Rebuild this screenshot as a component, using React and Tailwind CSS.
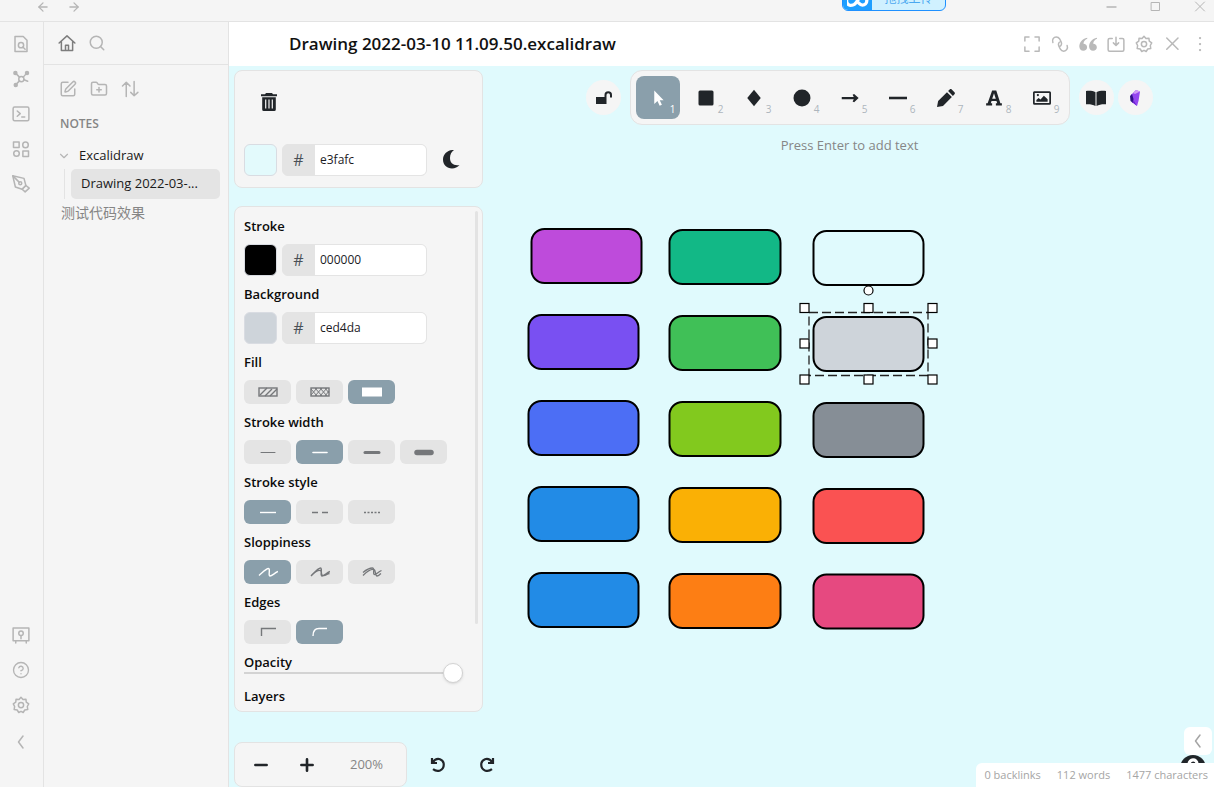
import React, { useState } from 'react';
import { ArrowLeft, ArrowRight, Search, FolderPlus, SquarePen, ChevronDown, CircleQuestionMark, X } from 'lucide-react';

const shapes = [
  { x: 302.5, y: 163, w: 110, fill: '#be4bdb' },
  { x: 299.5, y: 249, w: 110, fill: '#7950f2' },
  { x: 299.5, y: 335, w: 110, fill: '#4c6ef5' },
  { x: 299.5, y: 421, w: 110, fill: '#228be6' },
  { x: 299.5, y: 507, w: 110, fill: '#228be6' },
  { x: 440.5, y: 164, w: 111, fill: '#12b886' },
  { x: 440.5, y: 250, w: 111, fill: '#40c057' },
  { x: 440.5, y: 336, w: 111, fill: '#82c91e' },
  { x: 440.5, y: 422, w: 111, fill: '#fab005' },
  { x: 440.5, y: 508, w: 111, fill: '#fd7e14' },
  { x: 584.5, y: 165, w: 110, fill: 'none' },
  { x: 584.5, y: 251, w: 110, fill: '#ced4da' },
  { x: 584.5, y: 337, w: 110, fill: '#868e96' },
  { x: 584.5, y: 423, w: 110, fill: '#fa5252' },
  { x: 584.5, y: 508.5, w: 110, fill: '#e64980' },
];

const handles = [
  [575.5, 242], [639.5, 242], [703.5, 242],
  [575.5, 277.5], [703.5, 277.5],
  [575.5, 313.5], [639.5, 313.5], [703.5, 313.5],
];

const Icon = ({ size = 18, box = 24, children }) => (
  <svg width={size} height={size} viewBox={`0 0 ${box} ${box}`} fill="none" stroke="currentColor" strokeWidth="2" strokeLinecap="round" strokeLinejoin="round" aria-hidden="true">
    {children}
  </svg>
);

const GearIcon = () => (
  <Icon>
    <path d="M12 1.8l2.6 3 4-.5.4 4 3.3 2.2-1.9 3.5.6 4-4 .7-2.1 3.3-2.9-1.6-3 1.6-2.1-3.3-4-.7.6-4L1.7 10.5 5 8.3l.4-4 4 .5z" />
    <circle cx="12" cy="12" r="3.5" />
  </Icon>
);

const ThinChevron = () => (
  <svg width="16" height="22" viewBox="0 0 16 22" fill="none" stroke="currentColor" strokeWidth="1.5" strokeLinecap="round" strokeLinejoin="round" aria-hidden="true">
    <path d="M10 5L5.5 11l4.500 6" />
  </svg>
);

const ribbonTop = [
  { label: 'Quick switcher', icon: <><path d="M4 2h11l5 5v15H4z" /><circle cx="12" cy="13.5" r="3.5" /><path d="M14.5 16L17.5 19" /></> },
  { label: 'Graph view', icon: <><circle cx="4.5" cy="4" r="2" fill="currentColor" /><circle cx="20" cy="4" r="2" fill="currentColor" /><circle cx="5" cy="20" r="2" fill="currentColor" /><circle cx="12.5" cy="12" r="3.5" /><path d="M6 5.5l4 4M18.5 5.5L15 9.5M6 18.5l4-4M16 13l5 2" /></> },
  { label: 'Command palette', icon: <><rect x="1.5" y="2.5" width="21" height="18.5" rx="2" /><path d="M7 8l4 3.5L7 15M13 16h4" /></> },
  { label: 'Workspaces', icon: <><rect x="2" y="2.5" width="7.5" height="7.5" /><circle cx="18" cy="6.5" r="3.7" /><circle cx="6" cy="18" r="3.7" /><rect x="14.5" y="14.5" width="7.5" height="7.5" /></> },
  { label: 'New drawing', icon: <><path d="M1 1l15 3.500 2.500 9.500-5 5-9-3z" /><path d="M1.5 1.5l8 8M13.5 19l5-5 4.500 3.500-5.500 5z" /><circle cx="11" cy="11" r="2" /></> },
];

const ribbonBottom = [
  { label: 'Open another vault', icon: <Icon><path d="M1.5 2.5h21v17h-21zM5 20v2.500M19 20v2.500M12 13v4" /><circle cx="12" cy="9.5" r="3" /></Icon> },
  { label: 'Help', icon: <CircleQuestionMark size={18} strokeWidth={1.8} /> },
  { label: 'Settings', icon: <GearIcon /> },
  { label: 'Collapse', icon: <ThinChevron /> },
];

const headerActions = [
  { label: 'Fullscreen', icon: <path d="M2.5 8V2.500H8M16 2.500h5.500V8M21.5 16v5.500H16M8 21.500H2.500V16" /> },
  { label: 'Copy link', icon: <path d="M2.5 10C1 6 3.500 2.500 7 2.500c2 0 3.500 1 4.500 2.800l2 3.700c1.300 2.700.3 5.500-2.500 6.500M21.5 14c1.500 4-1 7.500-4.500 7.500-2 0-3.500-1-4.500-2.800l-2-3.700c-1.300-2.700-.3-5.500 2.500-6.500" /> },
  { label: 'Quote', icon: <path fill="currentColor" stroke="none" d="M11 3.500C4 5 0 10 .5 16c.3 3 2.300 5 5.200 5 3 0 5.100-2 5.100-4.800S8.600 11.500 6 11.500c0-3 2.200-5.500 5-6.500zM24 3.500c-7 1.500-11 6.500-10.500 12.500.3 3 2.300 5 5.200 5 3 0 5.100-2 5.100-4.800s-2.200-4.700-4.800-4.700c0-3 2.200-5.500 5-6.500z" /> },
  { label: 'Export', icon: <path d="M7 4.500H3.500c-1 0-2 1-2 2v13c0 1 1 2 2 2h17c1 0 2-1 2-2v-13c0-1-1-2-2-2H17M12 3v10.500M8.500 10.500l3.500 3.500 3.500-3.500" /> },
];

// filled glyphs on a 24x24 grid
const tools = [
  { label: 'Selection', icon: <path d="M7 2v18l4.300-4 2.900 6.300 3-1.300-2.900-6h5.200z" /> },
  { label: 'Rectangle', icon: <rect x="2" y="2" width="20" height="20" rx="2" /> },
  { label: 'Diamond', icon: <path d="M12 1l9 11-9 11-9-11z" /> },
  { label: 'Ellipse', icon: <circle cx="12" cy="12" r="11.3" /> },
  { label: 'Arrow', icon: <path d="M1 10.500h16l-1.500-3L17.500 6.500 23.500 12l-6 5.500-2-1 1.500-3H1z" /> },
  { label: 'Line', icon: <path d="M0 10.300h24v3.400H0z" /> },
  { label: 'Draw', icon: <path d="M0 24l1.500-8L13.300 4.200l6.500 6.500L8 22.500zM14.800 2.800l2.100-2.100c.8-.8 2-.8 2.700 0l3.700 3.700c.8.8.8 2 0 2.700l-2.100 2.100z" /> },
  { label: 'Text', icon: <path fillRule="evenodd" d="M9.500 2H15l5.500 17H22.500v3h-8v-3h1.800l-1-3H8.700l-1 3h1.800v3h-8v-3h2zM9.600 13h4.800L12 5.800z" /> },
  { label: 'Image', icon: <path fillRule="evenodd" d="M2 3h20a2 2 0 012 2v14a2 2 0 01-2 2H2a2 2 0 01-2-2V5c0-1.100.900-2 2-2zm.3 2.300v13.400h19.400V5.300zM4.500 17v-2.500l3-2.500 2.500 2 4.500-5 5 4.500V17zM5 8a1.500 1.500 0 103 0 1.500 1.500 0 00-3 0z" /> },
];

const strokeWidths = [1, 1.6, 3, 5.5];

const optionGroups = [
  {
    name: 'Fill',
    active: 2,
    options: [
      <g key="hachure"><rect x="1" y="2" width="18" height="8" /><path d="M2 9l7-7M7 10l7-7M12 10l7-7" /></g>,
      <g key="cross"><rect x="1" y="2" width="18" height="8" /><path d="M1 9l6-7M5 10l7-8M10 10l7-8M15 10l4-5M1 3l6 7M5 2l7 8M10 2l7 8M15 2l4 5" strokeWidth="1" /></g>,
      <rect key="solid" x="0" y="1.5" width="20" height="9" fill="currentColor" stroke="none" />,
    ],
  },
  {
    name: 'Stroke width',
    active: 1,
    options: strokeWidths.map((w) => (
      <path key={w} d="M3 6.500h14" strokeWidth={w} strokeLinecap="round" />
    )),
  },
  {
    name: 'Stroke style',
    active: 0,
    options: [
      <path key="solid" d="M2 6.500h16" />,
      <path key="dashed" d="M2 6.500h6M12 6.500h6" strokeWidth="1.7" />,
      <path key="dotted" d="M2 6.500h16" strokeWidth="1.6" strokeDasharray="2 1.5" />,
    ],
  },
  {
    name: 'Sloppiness',
    active: 0,
    options: [
      <path key="architect" d="M1 9.500C4 7 8 2.500 10.500 2.500c2 0-.5 7.500 1.500 7.500s4-2.500 8-4.500" />,
      <path key="artist" d="M1 10C4 7 8 2 10.500 2c2 0-.5 8 1.500 8s4-2.500 8-4.500M1 10c4-4 8-6 9.500-5.500s0 5.500 3 5 3-1.500 6-2" />,
      <path key="cartoonist" d="M1 6.500C4 4 8 2 10.500 2s0 6.500 2 6.500 3-2 7-4M1 9.500c5-5 9-6.500 11-6s1 6.500 3 6.500 2-1 4-2.500" strokeWidth="1.3" />,
    ],
  },
  {
    name: 'Edges',
    active: 1,
    options: [
      <path key="sharp" d="M3.500 10V2.500H18" />,
      <path key="round" d="M3 10C3 4 6 2.500 9 2.500h8" />,
    ],
  },
];

const ColorField = ({ label, value, swatch }) => {
  const [hex, setHex] = useState(value);
  return (
    <div className="flex gap-[5px]">
      <button aria-label={`${label} picker`} className={`w-[33px] h-8 rounded-md border border-[#d9dce2] ${swatch}`} />
      <label className="flex w-[145px] h-8 rounded-md border border-[#e4e4e4] bg-[#e4e4e4] overflow-hidden">
        <span className="w-8 pr-px flex items-center justify-center text-base text-[#495057]">#</span>
        <input
          aria-label={label}
          value={hex}
          onChange={(e) => setHex(e.target.value)}
          className="flex-1 min-w-0 bg-white px-[5px] text-xs text-[#1b1b1f] outline-none"
        />
      </label>
    </div>
  );
};

const OptionGroup = ({ name, active, options }) => {
  const [selected, setSelected] = useState(active);
  return (
    <fieldset>
      <legend className="text-[13px] leading-5 font-semibold mb-2">{name}</legend>
      <div className="flex gap-[5px]">
        {options.map((icon, i) => (
          <button
            key={i}
            aria-label={`${name} ${i + 1}`}
            aria-pressed={selected === i}
            onClick={() => setSelected(i)}
            className={`w-[47px] h-6 rounded-md flex items-center justify-center ${selected === i ? 'bg-[#8a9fab] text-white' : 'bg-[#e4e4e4] text-[#75777a]'}`}
          >
            <svg width="20" height="12" viewBox="0 0 20 12" fill="none" stroke="currentColor" strokeWidth="1.4" aria-hidden="true">{icon}</svg>
          </button>
        ))}
      </div>
    </fieldset>
  );
};

const TitleBar = () => (
  <header className="relative h-[22px] shrink-0 border-b border-[#e3e3e3] flex items-start justify-between pl-9 overflow-hidden text-[#b5b5b5]">
    <div className="flex gap-[17px]">
      <button aria-label="Back"><ArrowLeft size={14} strokeWidth={2.2} /></button>
      <button aria-label="Forward"><ArrowRight size={14} strokeWidth={2.2} /></button>
    </div>
    <div className="flex gap-8 pr-2 pt-px">
      <button aria-label="Minimize"><Icon size={12} box={12}><path d="M1 6h9" strokeWidth="1.3" /></Icon></button>
      <button aria-label="Maximize"><Icon size={12} box={12}><path d="M1.5 1.500h8v8h-8z" strokeWidth="1" /></Icon></button>
      <button aria-label="Close"><Icon size={12} box={12}><path d="M1.5 1l9 9M10.500 1l-9 9" strokeWidth="1" /></Icon></button>
    </div>
    {/* upload badge, hangs over the top edge */}
    <div className="absolute right-[268px] -top-3 h-[23px] w-[104px] rounded-md border border-[#1e90ff] bg-[#d0f1ff] flex overflow-hidden text-[#4aa8f0]">
      <span className="w-[29px] bg-[#1e9fff] flex items-end justify-center text-white">
        <Icon size={22} box={20}><path d="M5 8a4 4 0 100 7.500c4 0 5-8 9-8a4 4 0 110 8c-1.500 0-2.500-1-3.500-2" strokeWidth="3" /></Icon>
      </span>
      <span className="flex-1 text-center text-xs leading-5 whitespace-nowrap">拖拽上传</span>
    </div>
  </header>
);

const Sidebar = () => (
  <aside className="w-[185px] shrink-0 border-r border-[#e3e3e3] text-[#b5b5b5]">
    <div className="h-[43px] border-b border-[#e3e3e3] flex items-center gap-3 pl-[14px]">
      <button aria-label="Files" className="text-[#7d7d7d]">
        <Icon><path d="M1.5 12L12 2.500 22.500 12M4.5 10v12h15V10M10 22v-7h4v7" /></Icon>
      </button>
      <button aria-label="Search"><Search size={18} strokeWidth={2} /></button>
    </div>
    <div className="flex gap-[13px] pt-[15px] pl-[15px]">
      <button aria-label="New note"><SquarePen size={18} strokeWidth={2} /></button>
      <button aria-label="New folder"><FolderPlus size={18} strokeWidth={2} /></button>
      <button aria-label="Sort"><Icon><path d="M7 22V3M2 8l5-5 5 5M17.5 2v19M13 16.500l4.500 4.500 5-4.500" /></Icon></button>
    </div>
    <h2 className="pl-4 pt-[18px] text-xs leading-4 font-semibold text-[#858585]">NOTES</h2>
    <nav className="pt-[11px] pl-[13px] pr-2 text-[13px]">
      <a href="#excalidraw" className="flex items-center h-[26px] text-[#1a1a1a]">
        <ChevronDown size={14} className="mr-2 text-[#b5b5b5]" />
        Excalidraw
      </a>
      <div className="ml-[7px] pl-[6px] border-l border-[#e3e3e3]">
        <a href="#drawing" className="flex items-center h-[30px] rounded-[5px] bg-[#e4e4e4] px-[10px] text-[#1a1a1a] whitespace-nowrap">Drawing 2022-03-...</a>
      </div>
      <a href="#note" className="flex items-center h-7 pl-1 text-sm text-[#858585]">测试代码效果</a>
    </nav>
  </aside>
);

const Drawing = () => (
  <svg className="absolute inset-0 w-full h-full" aria-label="Drawing canvas">
    {shapes.map((s, i) => (
      <rect key={i} x={s.x} y={s.y} width={s.w} height="54" rx="13" fill={s.fill} stroke="#000" strokeWidth="2" />
    ))}
    <rect x="580" y="246.5" width="119" height="63" fill="none" stroke="#222" strokeWidth="1.3" strokeDasharray="9 4" />
    {handles.map(([x, y]) => (
      <rect key={`${x}-${y}`} x={x - 4.5} y={y - 4.5} width="9" height="9" fill="#fff" stroke="#000" strokeWidth="1.2" />
    ))}
    <circle cx="639.5" cy="224.5" r="4.5" fill="#fff" stroke="#000" strokeWidth="1.2" />
  </svg>
);

const Toolbar = () => {
  const [tool, setTool] = useState(0);
  return (
    <div className="flex-1 pl-[2px] grid grid-cols-[1fr_auto_1fr] items-center content-start">
      <button aria-label="Keep tool active" className="justify-self-end mr-[9px] w-[35px] h-[35px] rounded-full bg-[#f5f5f5] flex items-center justify-center text-[#212529]">
        <svg width="18" height="18" viewBox="0 0 18 18" fill="currentColor" aria-hidden="true">
          <path d="M2 8h8.500V6a3.700 3.700 0 017.500 0v2.500h-2V6a1.700 1.700 0 00-3.500 0v9H2z" />
        </svg>
      </button>
      <div className="flex gap-1 p-[5px] rounded-xl border border-[#e3e3e3] bg-[#f5f5f5]">
        {tools.map((t, i) => (
          <button
            key={t.label}
            aria-label={t.label}
            onClick={() => setTool(i)}
            className={`relative w-11 h-[43px] rounded-lg flex items-center justify-center ${tool === i ? 'bg-[#8a9fab] text-white' : 'text-[#212529]'}`}
          >
            <svg width="18" height="18" viewBox="0 0 24 24" fill="currentColor" aria-hidden="true">{t.icon}</svg>
            <span className={`absolute right-1 bottom-1 text-[10px] leading-3 ${tool === i ? 'text-white' : 'text-[#adb5bd]'}`}>{i + 1}</span>
          </button>
        ))}
      </div>
      <div className="flex gap-1 ml-[9px]">
        <button aria-label="Library" className="w-[35px] h-[35px] rounded-full bg-[#f5f5f5] flex items-center justify-center text-[#212529]">
          <svg width="20" height="16" viewBox="0 0 20 16" fill="currentColor" aria-hidden="true">
            <path d="M0 1c4-.5 7 0 9.500 1.200V16C7 14.500 4 14 0 14.200zM20 1c-4-.5-7 0-9.500 1.200V16c2.500-1.500 5.500-2 9.500-1.800z" />
          </svg>
        </button>
        <button aria-label="Obsidian tools" className="w-[35px] h-[35px] rounded-full bg-[#f5f5f5] flex items-center justify-center">
          <svg width="12" height="18" viewBox="0 0 12 18" aria-hidden="true">
            <path d="M2 6l5-5 4 1.500-1.500 9.500L8 17l-5-4z" fill="#9446f0" />
            <path d="M1 7l2-2 1.500 5L4 14 1.500 12z" fill="#30108a" />
            <path d="M4 4l3.500-3L11 2.500 6 5z" fill="#d19bf5" />
            <path d="M5 12l-2 1 5 4z" fill="#6c21cf" />
          </svg>
        </button>
      </div>
      <p className="col-start-2 pt-[10px] text-center text-[13px] leading-5 text-[#868686]">Press Enter to add text</p>
    </div>
  );
};

const PropertiesPanel = () => (
  <section className="relative flex-1 min-h-0 mt-[18px] mb-[30px] px-[9px] pt-[9px] rounded-lg border border-[#e3e3e3] bg-[#f5f5f5] overflow-hidden flex flex-col gap-2">
    <div className="absolute right-1 top-1 h-[413px] w-[3px] rounded bg-[#e3e3e3]" />
    <h3 className="text-[13px] leading-5 font-semibold">Stroke</h3>
    <ColorField label="Stroke color" value="000000" swatch="bg-black" />
    <h3 className="text-[13px] leading-5 font-semibold">Background</h3>
    <ColorField label="Background color" value="ced4da" swatch="bg-[#ced4da]" />
    {optionGroups.map((g) => (
      <OptionGroup key={g.name} {...g} />
    ))}
    <label className="block text-[13px] leading-5 font-semibold">
      Opacity
      <input
        type="range"
        defaultValue="100"
        className="block w-[219px] h-[2px] mb-1 appearance-none bg-[#d3d3d3] [&::-webkit-slider-thumb]:appearance-none [&::-webkit-slider-thumb]:w-5 [&::-webkit-slider-thumb]:h-5 [&::-webkit-slider-thumb]:rounded-full [&::-webkit-slider-thumb]:bg-white [&::-webkit-slider-thumb]:border [&::-webkit-slider-thumb]:border-[#d3d3d3] [&::-webkit-slider-thumb]:shadow-sm"
      />
    </label>
    <h3 className="text-[13px] leading-5 font-semibold">Layers</h3>
  </section>
);

const LeftColumn = () => (
  <div className="w-[249px] shrink-0 flex flex-col text-[#0b0b0b]">
    <section className="rounded-lg border border-[#e3e3e3] bg-[#f5f5f5] px-[9px] pt-[21px] pb-[11px]">
      <button aria-label="Reset the canvas" className="block ml-4 text-[#212529]">
        <svg width="18" height="20" viewBox="0 0 18 20" aria-hidden="true">
          <path d="M6 1h6l1 1.200h4v2H1v-2h4zM2.200 5.300h13.600V17.500a1.500 1.500 0 01-1.500 1.500H3.700a1.500 1.500 0 01-1.500-1.500z" fill="currentColor" />
          <path d="M5.700 7.500v9M9 7.500v9M12.300 7.500v9" stroke="#f5f5f5" strokeWidth="1.2" />
        </svg>
      </button>
      <div className="flex items-center gap-4 pt-8">
        <ColorField label="Canvas background" value="e3fafc" swatch="bg-[#e3fafc]" />
        <button aria-label="Dark mode" className="text-[#212529]">
          <svg width="20" height="20" viewBox="0 0 20 20" fill="currentColor" aria-hidden="true">
            <path d="M11 0C5-.5 0 4 0 9.500s4 9 9 9c3 0 5.500-1.200 7.500-3.500-6 1-9.500-2-9.500-7C7 4.500 8.500 1.500 11 0z" />
          </svg>
        </button>
      </div>
    </section>
    <PropertiesPanel />
    <div className="w-max flex items-center">
      <div className="w-[173px] h-[45px] rounded-lg border border-[#e3e3e3] bg-[#f5f5f5] flex items-center pl-[17px] text-[#212529]">
        <button aria-label="Zoom out"><Icon><path d="M4.500 12h15" strokeWidth="3.5" /></Icon></button>
        <button aria-label="Zoom in" className="ml-7"><Icon><path d="M4.500 12h15M12 4.500v15" strokeWidth="3.5" /></Icon></button>
        <button className="ml-[34px] text-[13px] text-[#868686]">200%</button>
      </div>
      <button aria-label="Undo" className="ml-[22px] text-[#212529]">
        <svg width="18" height="18" viewBox="0 0 18 18" fill="none" stroke="currentColor" strokeWidth="2.2" aria-hidden="true"><path d="M3 2v5h5M3.500 6.500C6 3 9 2.500 11 3.200c5 1.800 5 9 0 11.200-2.500 1-5 .3-7-1.200" /></svg>
      </button>
      <button aria-label="Redo" className="ml-[31px] text-[#212529]">
        <svg width="18" height="18" viewBox="0 0 18 18" fill="none" stroke="currentColor" strokeWidth="2.2" aria-hidden="true"><path d="M15 2v5h-5M14.500 6.500C12 3 9 2.500 7 3.200c-5 1.800-5 9 0 11.200 2.500 1 5 .3 7-1.200" /></svg>
      </button>
    </div>
  </div>
);

const StatusBar = () => (
  <div className="absolute right-0 bottom-0 flex flex-col items-end">
    <div className="relative mr-[2px]">
      {/* help button, mostly covered by the status bar */}
      <svg className="absolute -bottom-[26px] right-[6px]" width="26" height="26" viewBox="0 0 26 26" aria-hidden="true">
        <circle cx="13" cy="13" r="13" fill="#212529" />
        <path d="M9 9.500C9 3.500 17 3.500 17 9c0 3-4 3.500-4 6.500" fill="none" stroke="#fff" strokeWidth="3.2" />
        <circle cx="13" cy="20" r="2" fill="#fff" />
      </svg>
      <button aria-label="Expand right sidebar" className="relative w-7 h-7 rounded-md bg-white flex items-center justify-center text-[#a5a5a5]">
        <ThinChevron />
      </button>
    </div>
    <footer className="relative mt-2 h-6 pl-2 pr-[6px] rounded-tl-md bg-white flex items-center gap-4 text-[11px] text-[#a5a5a5]">
      <span>0 backlinks</span>
      <span>112 words</span>
      <span>1477 characters</span>
    </footer>
  </div>
);

const App = () => (
  <div className="h-screen flex flex-col overflow-hidden bg-[#f5f5f5] font-['Open_Sans','Noto_Sans_CJK_SC',sans-serif]">
    <TitleBar />
    <div className="flex-1 min-h-0 flex">
      <nav className="w-11 shrink-0 border-r border-[#e3e3e3] flex flex-col items-center pt-[13px] pr-[2px] pb-[34px] text-[#b5b5b5]">
        <div className="flex flex-col gap-[17px]">
          {ribbonTop.map((item) => (
            <button key={item.label} aria-label={item.label}><Icon>{item.icon}</Icon></button>
          ))}
        </div>
        <div className="mt-auto flex flex-col items-center gap-[17px]">
          {ribbonBottom.map((item) => (
            <button key={item.label} aria-label={item.label}>{item.icon}</button>
          ))}
        </div>
      </nav>
      <Sidebar />
      <main className="flex-1 min-w-0 flex flex-col">
        <header className="h-11 shrink-0 bg-white flex items-center justify-between pl-[60px] pr-[5px] text-[#b9b9b9]">
          <h1 className="text-[17px] font-semibold text-[#111]">Drawing 2022-03-10 11.09.50.excalidraw</h1>
          <div className="flex items-center gap-[10px]">
            {headerActions.map((a) => (
              <button key={a.label} aria-label={a.label}><Icon>{a.icon}</Icon></button>
            ))}
            <button aria-label="Settings"><GearIcon /></button>
            <button aria-label="Close"><Icon><path d="M5 4l15 15M20 4L5 19" /></Icon></button>
            <button aria-label="More options"><Icon><path d="M12 4h.1M12 12h.1M12 20h.1" strokeWidth="3" /></Icon></button>
          </div>
        </header>
        <div className="relative flex-1 min-h-0 bg-[#e0fafd]">
          <Drawing />
          <div className="relative h-full flex pl-[5px] pt-1">
            <LeftColumn />
            <Toolbar />
          </div>
          <StatusBar />
        </div>
      </main>
    </div>
  </div>
);

export default App;
